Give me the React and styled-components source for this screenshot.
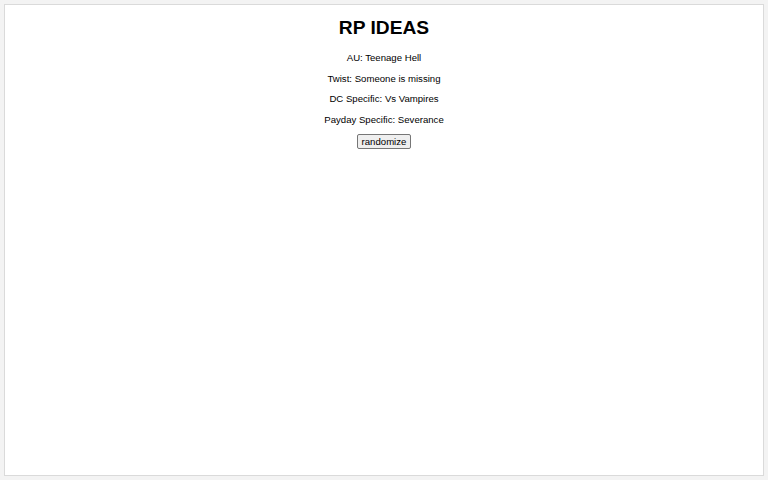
import styled, { createGlobalStyle } from "styled-components";

const GlobalStyle = createGlobalStyle`
  html, body {
    margin: 0;
    padding: 0;
    background: #f3f3f3;
  }
  body {
    padding: 4px;
    font-family: "Liberation Sans", Arial, sans-serif;
  }
`;

const Frame = styled.div`
  box-sizing: border-box;
  height: 472px;
  background: #fff;
  border: 1px solid #dadada;
  text-align: center;
  color: #000;
  overflow: hidden;
`;

const Title = styled.h1`
  font-size: 19.2px;
  font-weight: bold;
  margin: 12px 0 13px;
`;

const Ideas = styled.div`
  margin-bottom: 6px;
`;

const Idea = styled.p`
  font-size: 9.6px;
  margin: 9.6px 0;
  line-height: 11px;

  &:last-child {
    margin-bottom: 0;
  }
`;

const Button = styled.button`
  font-family: "Liberation Sans", Arial, sans-serif;
  font-size: 9.6px;
  padding: 1px 4px;
  background: #efefef;
  border: 1px solid #767676;
  border-radius: 2px;
  color: #000;
`;

const ideas = [
  "AU: Teenage Hell",
  "Twist: Someone is missing",
  "DC Specific: Vs Vampires",
  "Payday Specific: Severance",
];

export default function App() {
  return (
    <>
      <GlobalStyle />
      <Frame>
        <Title>RP IDEAS</Title>
        <Ideas>
          {ideas.map((text) => (
            <Idea key={text}>{text}</Idea>
          ))}
        </Ideas>
        <Button>randomize</Button>
      </Frame>
    </>
  );
}
